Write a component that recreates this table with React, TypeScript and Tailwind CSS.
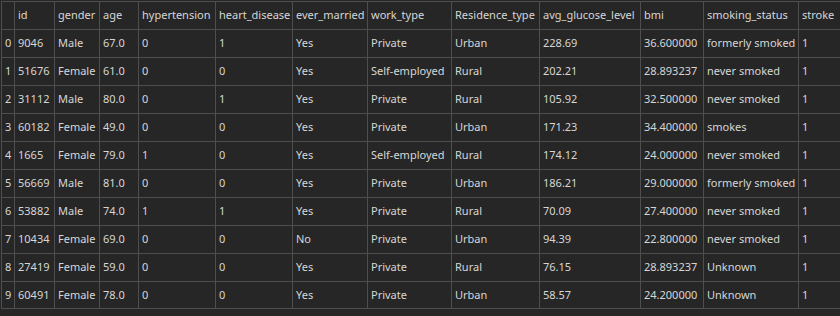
import React from "react";

const cols = [
  { key: "", w: 13 },
  { key: "id", w: 40 },
  { key: "gender", w: 45 },
  { key: "age", w: 39 },
  { key: "hypertension", w: 77 },
  { key: "heart_disease", w: 77 },
  { key: "ever_married", w: 75 },
  { key: "work_type", w: 84 },
  { key: "Residence_type", w: 88 },
  { key: "avg_glucose_level", w: 101 },
  { key: "bmi", w: 63 },
  { key: "smoking_status", w: 95 },
  { key: "stroke", w: 50 },
];

const rows: string[][] = [
  ["0", "9046", "Male", "67.0", "0", "1", "Yes", "Private", "Urban", "228.69", "36.600000", "formerly smoked", "1"],
  ["1", "51676", "Female", "61.0", "0", "0", "Yes", "Self-employed", "Rural", "202.21", "28.893237", "never smoked", "1"],
  ["2", "31112", "Male", "80.0", "0", "1", "Yes", "Private", "Rural", "105.92", "32.500000", "never smoked", "1"],
  ["3", "60182", "Female", "49.0", "0", "0", "Yes", "Private", "Urban", "171.23", "34.400000", "smokes", "1"],
  ["4", "1665", "Female", "79.0", "1", "0", "Yes", "Self-employed", "Rural", "174.12", "24.000000", "never smoked", "1"],
  ["5", "56669", "Male", "81.0", "0", "0", "Yes", "Private", "Urban", "186.21", "29.000000", "formerly smoked", "1"],
  ["6", "53882", "Male", "74.0", "1", "1", "Yes", "Private", "Rural", "70.09", "27.400000", "never smoked", "1"],
  ["7", "10434", "Female", "69.0", "0", "0", "No", "Private", "Urban", "94.39", "22.800000", "never smoked", "1"],
  ["8", "27419", "Female", "59.0", "0", "0", "Yes", "Private", "Rural", "76.15", "28.893237", "Unknown", "1"],
  ["9", "60491", "Female", "78.0", "0", "0", "Yes", "Private", "Urban", "58.57", "24.200000", "Unknown", "1"],
];

function Row({ cells, last }: { cells: string[]; last?: boolean }) {
  return (
    <div className={`flex h-[28px] border-t border-[#4e4e4e] ${last ? "border-b" : ""}`}>
      {cells.map((c, i) => (
        <div
          key={i}
          style={{ width: cols[i].w }}
          className="shrink-0 border-l border-[#4e4e4e] pl-[3px] flex items-center whitespace-nowrap overflow-hidden"
        >
          {c}
        </div>
      ))}
    </div>
  );
}

export default function App() {
  return (
    <div
      className="w-[840px] h-[316px] overflow-hidden bg-[#262626] text-[#d6d6d6] text-[11px] pl-[1px] pt-[1px]"
      style={{ fontFamily: '"Noto Sans", "Open Sans", sans-serif' }}
    >
      <div className="w-[900px]">
        <Row cells={cols.map((c) => c.key)} />
        {rows.map((r, i) => (
          <Row key={i} cells={r} last={i === rows.length - 1} />
        ))}
      </div>
    </div>
  );
}
